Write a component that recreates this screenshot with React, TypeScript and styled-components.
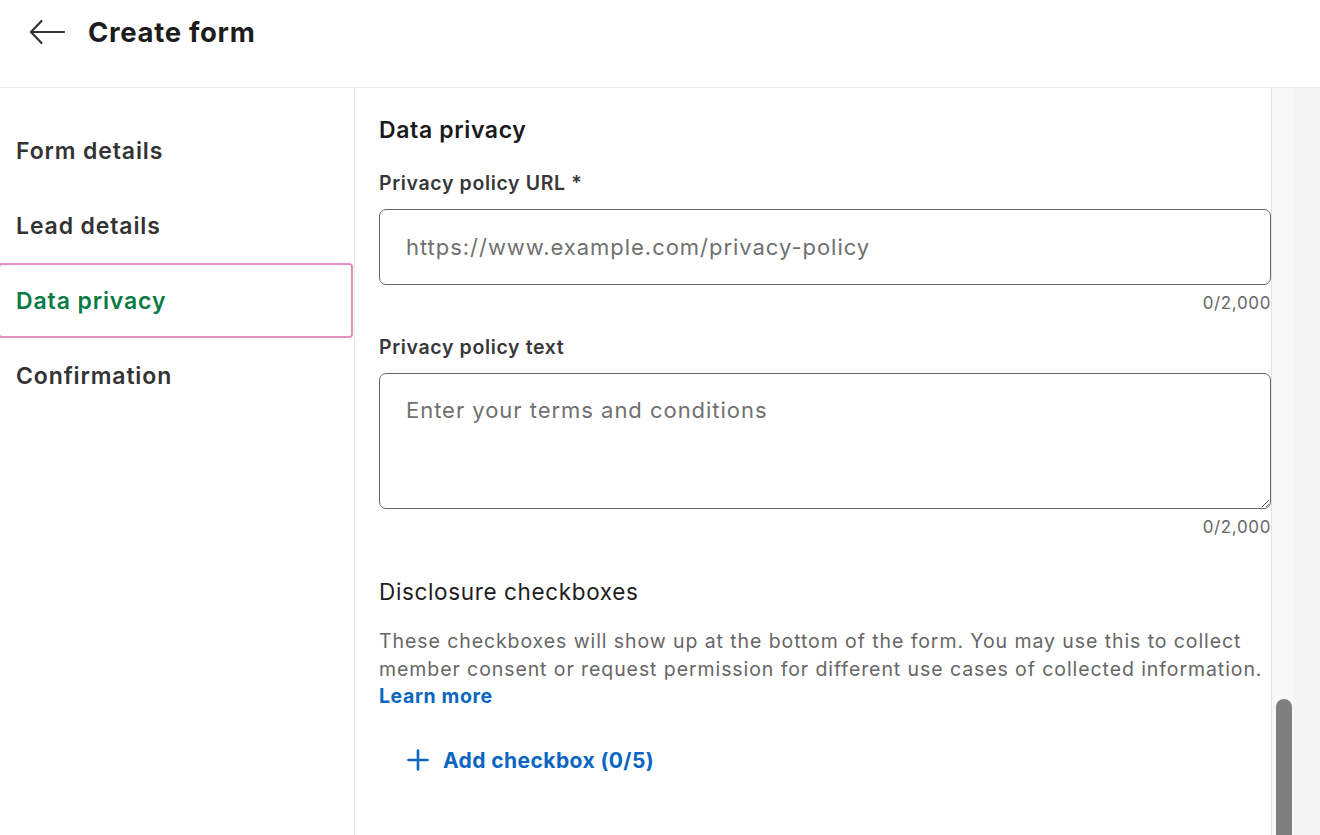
import React from "react";
import styled, { createGlobalStyle } from "styled-components";

const Global = createGlobalStyle`
  html, body { margin: 0; padding: 0; background: #fff; }
  body { font-family: Inter, "Noto Sans", "Liberation Sans", sans-serif; color: #1a1a1a; overflow: hidden; letter-spacing: 0.04em; }
  * { box-sizing: border-box; }
`;

const Page = styled.div`
  width: 1320px;
  height: 835px;
  display: flex;
  flex-direction: column;
  overflow: hidden;
`;

const Header = styled.header`
  height: 88px;
  flex: none;
  display: flex;
  align-items: center;
  gap: 22px;
  padding: 0 0 23px 29px;
  border-bottom: 1px solid #e9e9e9;
`;

const BackButton = styled.button`
  border: 0;
  background: none;
  padding: 0;
  width: 37px;
  height: 26px;
  display: flex;
  align-items: center;
  cursor: pointer;
`;

const Title = styled.h1`
  margin: 0;
  font-size: 27.5px;
  font-weight: 700;
  letter-spacing: 0.025em;
  color: #1d1d1d;
`;

const Body = styled.div`
  flex: 1;
  display: flex;
  min-height: 0;
`;

const Sidebar = styled.nav`
  width: 355px;
  flex: none;
  border-right: 1px solid #e6e6e6;
  padding-top: 25px;
  display: flex;
  flex-direction: column;
`;

const NavItem = styled.div<{ $active?: boolean }>`
  height: 75px;
  display: flex;
  align-items: center;
  padding-left: ${(p) => (p.$active ? "16px" : "14px")};
  margin-left: ${(p) => (p.$active ? "-2px" : "0")};
  margin-right: ${(p) => (p.$active ? "1px" : "0")};
  border: 2px solid ${(p) => (p.$active ? "#e48fc3" : "transparent")};
  border-radius: 4px;
  font-size: 23px;
  font-weight: 600;
  letter-spacing: 0.038em;
  color: ${(p) => (p.$active ? "#0b7a45" : "#333333")};
`;

const Main = styled.main`
  flex: 1;
  display: flex;
  min-width: 0;
`;

const Content = styled.div`
  flex: 1;
  padding: 26px 0 0 24px;
  display: flex;
  flex-direction: column;
`;

const SectionTitle = styled.h2`
  margin: 0;
  font-size: 23px;
  line-height: 32px;
  font-weight: 600;
  color: #1a1a1a;
`;

const Label = styled.label<{ $mt?: number }>`
  display: block;
  margin-top: ${(p) => p.$mt ?? 0}px;
  font-size: 19.5px;
  line-height: 28px;
  font-weight: 600;
  color: #383838;
`;

const TextInput = styled.input`
  display: block;
  width: 100%;
  height: 76px;
  margin-top: 12px;
  border: 1.5px solid #666;
  border-radius: 7px;
  padding: 0 26px;
  font-family: inherit;
  letter-spacing: 0.044em;
  font-size: 22px;
  color: #333;
  outline: none;
  &::placeholder { color: #707070; }
`;

const TextArea = styled.textarea`
  display: block;
  width: 100%;
  height: 136px;
  margin-top: 12px;
  border: 1.5px solid #666;
  border-radius: 7px;
  padding: 21px 26px;
  font-family: inherit;
  letter-spacing: 0.044em;
  font-size: 22px;
  line-height: 30px;
  color: #333;
  resize: vertical;
  outline: none;
  &::placeholder { color: #707070; }
`;

const Counter = styled.div`
  text-align: right;
  font-size: 17px;
  line-height: 24px;
  margin-top: 6px;
  color: #666;
`;

const SubTitle = styled.h3`
  margin: 38px 0 0;
  font-size: 22.5px;
  line-height: 30px;
  font-weight: 400;
  color: #1d1d1d;
`;

const Description = styled.p`
  margin: 21px 0 0;
  font-size: 19.5px;
  line-height: 27.5px;
  letter-spacing: 0.047em;
  color: #666;
`;

const LearnMore = styled.a`
  display: block;
  font-weight: 700;
  letter-spacing: 0.03em;
  color: #0a66c2;
  text-decoration: none;
`;

const AddButton = styled.button`
  align-self: flex-start;
  margin: 37px 0 0 28px;
  border: 0;
  background: none;
  padding: 0;
  display: flex;
  align-items: center;
  gap: 14px;
  font-family: inherit;
  letter-spacing: 0.02em;
  font-size: 21px;
  font-weight: 700;
  color: #0a66c2;
  cursor: pointer;
`;

const ScrollTrack = styled.div`
  width: 23px;
  flex: none;
  background: #f8f8f8;
  border-left: 1px solid #e3e3e3;
  display: flex;
  flex-direction: column;
  padding: 0 2px 0 4px;
`;

const ScrollThumb = styled.div`
  margin-top: auto;
  height: 148px;
  margin-bottom: -12px;
  border-radius: 8px;
  background: #7f7f7f;
`;

const Gutter = styled.div`
  width: 26px;
  flex: none;
  background: #f3f3f3;
`;

export default function App() {
  return (
    <Page>
      <Global />
      <Header>
        <BackButton aria-label="Back">
          <svg width="37" height="26" viewBox="0 0 37 26" fill="none">
            <path d="M2 13H35" stroke="#333" strokeWidth="2.2" strokeLinecap="round" />
            <path d="M12.5 2L2 13L12.5 24" stroke="#333" strokeWidth="2.2" strokeLinecap="round" strokeLinejoin="round" />
          </svg>
        </BackButton>
        <Title>Create form</Title>
      </Header>
      <Body>
        <Sidebar>
          <NavItem>Form details</NavItem>
          <NavItem>Lead details</NavItem>
          <NavItem $active>Data privacy</NavItem>
          <NavItem>Confirmation</NavItem>
        </Sidebar>
        <Main>
          <Content>
            <SectionTitle>Data privacy</SectionTitle>
            <Label $mt={23}>Privacy policy URL *</Label>
            <TextInput placeholder="https://www.example.com/privacy-policy" />
            <Counter>0/2,000</Counter>
            <Label $mt={18}>Privacy policy text</Label>
            <TextArea placeholder="Enter your terms and conditions" />
            <Counter>0/2,000</Counter>
            <SubTitle>Disclosure checkboxes</SubTitle>
            <Description>
              These checkboxes will show up at the bottom of the form. You may use this to collect member consent or request permission for different use cases of collected information.
              <LearnMore href="#">Learn more</LearnMore>
            </Description>
            <AddButton>
              <svg width="22" height="22" viewBox="0 0 22 22" fill="none">
                <path d="M11 1.5V20.5M1.5 11H20.5" stroke="#0a66c2" strokeWidth="2.6" strokeLinecap="round" />
              </svg>
              Add checkbox (0/5)
            </AddButton>
          </Content>
          <ScrollTrack>
            <ScrollThumb />
          </ScrollTrack>
          <Gutter />
        </Main>
      </Body>
    </Page>
  );
}
